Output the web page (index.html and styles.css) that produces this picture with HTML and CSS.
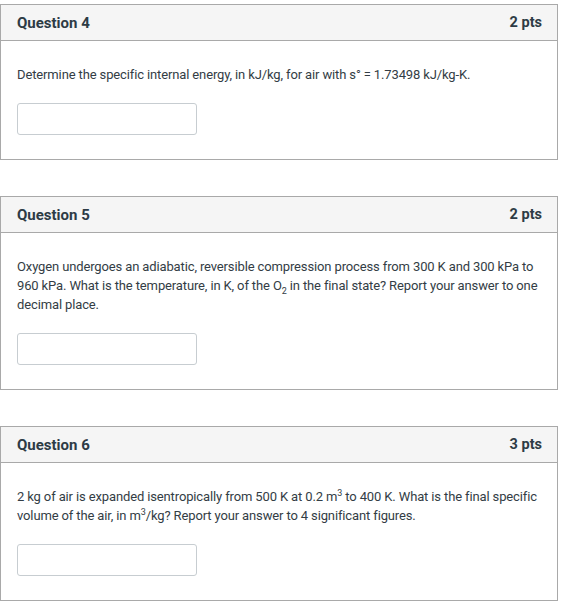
FILE: index.html
```html
<!DOCTYPE html>
<html>
<head>
<meta charset="utf-8">
<link rel="stylesheet" href="styles.css">
</head>
<body>
<div class="quiz">
  <div class="question">
    <div class="q-header">
      <span class="q-title">Question 4</span>
      <span class="q-pts">2 pts</span>
    </div>
    <div class="q-body">
      <p class="q-text">Determine the specific internal energy, in kJ/kg, for air with s° = 1.73498 kJ/kg-K.</p>
      <div class="answer"></div>
    </div>
  </div>
  <div class="question">
    <div class="q-header">
      <span class="q-title">Question 5</span>
      <span class="q-pts">2 pts</span>
    </div>
    <div class="q-body">
      <p class="q-text">Oxygen undergoes an adiabatic, reversible compression process from 300 K and 300 kPa to 960 kPa. What is the temperature, in K, of the O<sub>2</sub> in the final state? Report your answer to one decimal place.</p>
      <div class="answer"></div>
    </div>
  </div>
  <div class="question">
    <div class="q-header">
      <span class="q-title">Question 6</span>
      <span class="q-pts">3 pts</span>
    </div>
    <div class="q-body">
      <p class="q-text">2 kg of air is expanded isentropically from 500 K at 0.2 m<sup>3</sup> to 400 K. What is the final specific volume of the air, in m<sup>3</sup>/kg? Report your answer to 4 significant figures.</p>
      <div class="answer"></div>
    </div>
  </div>
</div>
</body>
</html>
```

FILE: styles.css
```css
html, body {
  margin: 0;
  padding: 0;
  background: #ffffff;
}
body {
  font-family: Roboto, "Liberation Sans", Arial, sans-serif;
  color: #2d3b45;
}
.quiz {
  display: flex;
  flex-direction: column;
  gap: 36px;
  padding-top: 4px;
  width: 558px;
}
.question {
  border: 1px solid #a9a9a9;
  background: #ffffff;
}
.q-header {
  display: flex;
  justify-content: space-between;
  align-items: center;
  height: 35px;
  padding: 0 15px 0 16px;
  background: #f5f5f5;
  border-bottom: 1px solid #a9a9a9;
  font-weight: 700;
  font-size: 15px;
}
.q-pts {
  font-weight: 700;
  font-size: 14.5px;
}
.q-body {
  padding: 24px 16px 24px 16px;
}
.q-text {
  margin: 0 0 19px 0;
  font-size: 13px;
  line-height: 19px;
  letter-spacing: -0.13px;
  color: #333d45;
}
.q-text sub, .q-text sup {
  font-size: 9px;
  line-height: 0;
}
.answer {
  width: 178px;
  height: 30px;
  border: 1px solid #c7cdd1;
  border-radius: 3px;
  background: #ffffff;
}
```
